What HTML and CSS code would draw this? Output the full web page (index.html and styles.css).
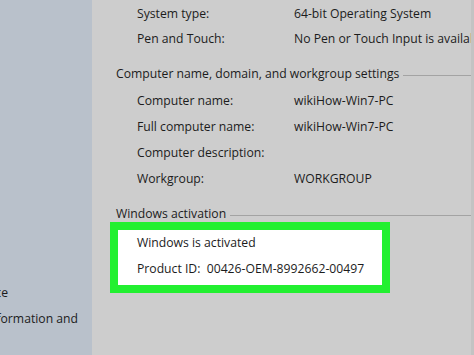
FILE: index.html
```html
<!DOCTYPE html>
<html>
<head>
<meta charset="utf-8">
<link rel="stylesheet" href="styles.css">
</head>
<body>
<div class="window">
  <aside class="sidebar">
    <div class="side-link first"><span>Performance</span></div>
    <div class="side-link second"><span>Performance Information and</span></div>
  </aside>
  <main class="main">
    <div class="group g1">
      <div class="row"><span class="label">System type:</span><span class="value">64-bit Operating System</span></div>
      <div class="row"><span class="label">Pen and Touch:</span><span class="value">No Pen or Touch Input is available for this Display</span></div>
    </div>
    <div class="heading h1"><span class="heading-text">Computer name, domain, and workgroup settings</span><span class="rule"></span></div>
    <div class="group g2">
      <div class="row"><span class="label">Computer name:</span><span class="value">wikiHow-Win7-PC</span></div>
      <div class="row"><span class="label">Full computer name:</span><span class="value">wikiHow-Win7-PC</span></div>
      <div class="row"><span class="label">Computer description:</span><span class="value"></span></div>
      <div class="row"><span class="label">Workgroup:</span><span class="value">WORKGROUP</span></div>
    </div>
    <div class="heading h2"><span class="heading-text">Windows activation</span><span class="rule"></span></div>
    <div class="highlight">
      <div class="hl-row">Windows is activated</div>
      <div class="hl-row">Product ID:&nbsp; 00426-OEM-8992662-00497</div>
    </div>
  </main>
</div>
</body>
</html>
```
FILE: styles.css
```css
html, body {
  margin: 0;
  padding: 0;
}
body {
  width: 474px;
  height: 355px;
  overflow: hidden;
  font-family: "Open Sans", "Noto Sans", sans-serif;
  font-size: 12.2px;
  color: #1c1c1c;
}
.window {
  display: flex;
  height: 355px;
}
.sidebar {
  width: 92px;
  flex: none;
  background: #b9c1cb;
  overflow: hidden;
  padding-top: 280px;
  box-sizing: border-box;
  white-space: nowrap;
}
.side-link {
  display: flex;
  justify-content: flex-end;
  line-height: 26px;
  height: 26px;
}
.side-link span {
  flex: none;
}
.side-link.first {
  margin-right: 84px;
}
.side-link.second {
  margin-right: 14px;
}
.main {
  flex: 1;
  background: #cdcdcd;
  border-right: 3px solid #c3c3c3;
  overflow: hidden;
  white-space: nowrap;
}
.group {
  padding-left: 45px;
}
.g1 {
  padding-top: 1px;
}
.g1 .row {
  line-height: 25px;
  height: 25px;
}
.g2 {
  margin-top: 4px;
}
.row {
  display: flex;
  line-height: 26px;
  height: 26px;
}
.label {
  width: 157px;
  flex: none;
}
.value {
  flex: none;
}
.heading {
  display: flex;
  align-items: center;
  padding-left: 24px;
  line-height: 20px;
  height: 20px;
}
.h1 {
  margin-top: 13px;
}
.h2 {
  margin-top: 12px;
}
.rule {
  flex: 1;
  height: 1px;
  background: #a3a3a3;
  margin-left: 4px;
  margin-top: 3px;
}
.highlight {
  box-sizing: border-box;
  margin-top: -2px;
  margin-left: 18px;
  width: 280px;
  height: 71px;
  border: 8px solid #22f030;
  background: #ffffff;
  padding-left: 19px;
}
.hl-row {
  line-height: 26px;
  height: 26px;
}
```
